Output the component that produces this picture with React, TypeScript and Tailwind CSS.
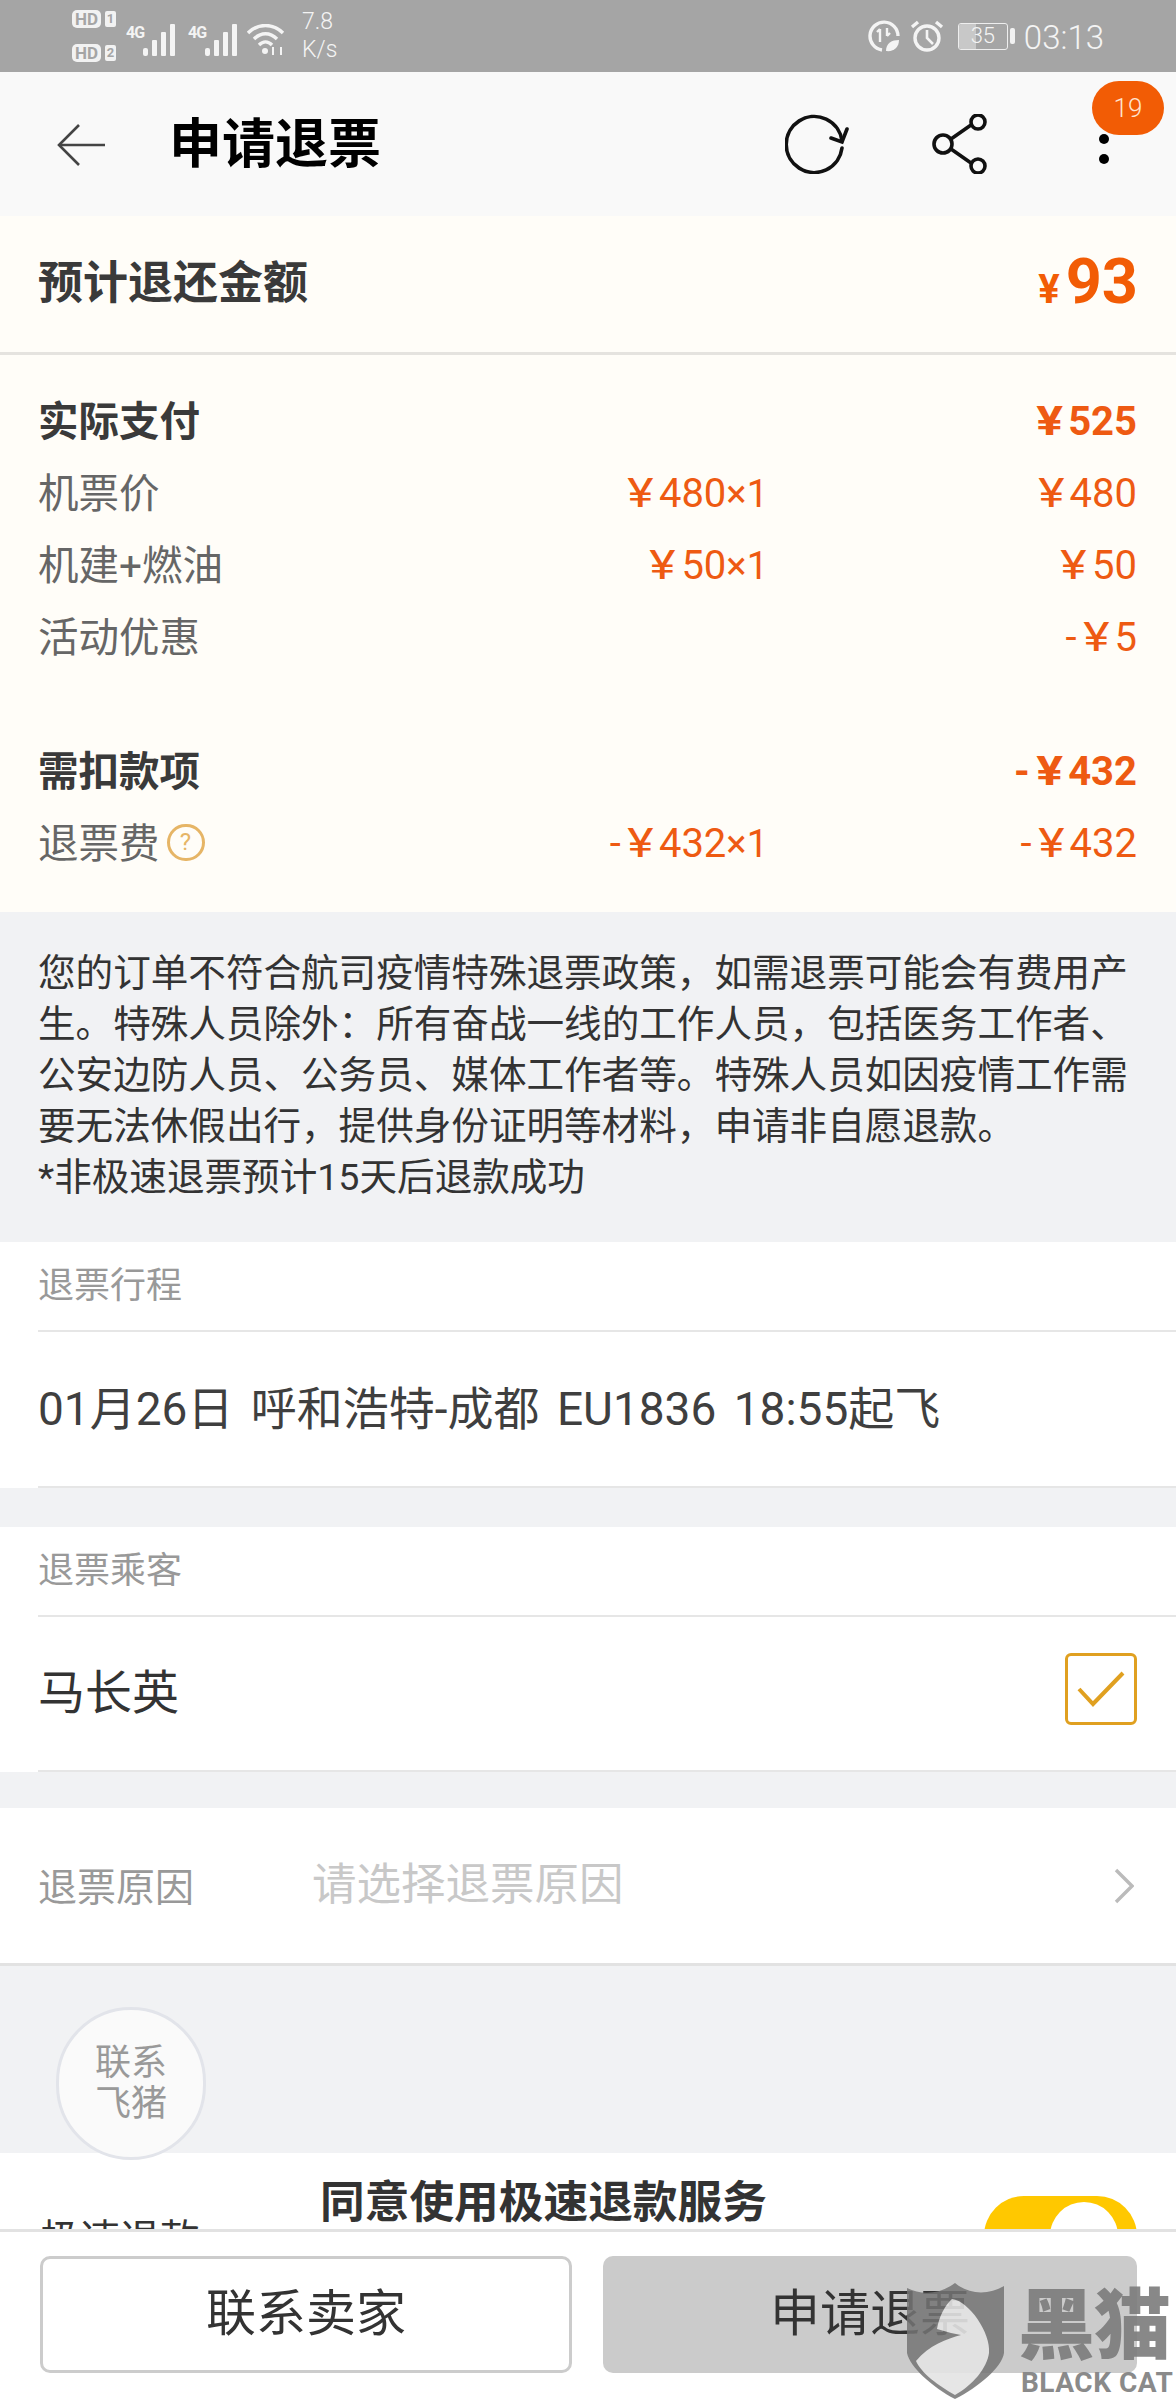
import React from "react";

const font = { fontFamily: 'Roboto, "Noto Sans CJK SC", sans-serif' };

function Bars() {
  return (
    <svg width="34" height="32" viewBox="0 0 34 32" fill="#f4f4f4">
      <rect x="0" y="24" width="5" height="8" rx="2" />
      <rect x="9" y="16" width="5" height="16" rx="1" />
      <rect x="18" y="8" width="5" height="24" rx="1" />
      <rect x="27" y="0" width="5" height="32" rx="1" />
    </svg>
  );
}

function Hd({ n }: { n: string }) {
  return (
    <div className="flex items-center gap-[4px]">
      <span className="w-[29px] h-[18px] rounded-[5px] bg-[#f2f2f2] text-[#a5a5a5] text-[17px] leading-[18px] font-bold text-center">HD</span>
      <span className="w-[11px] h-[16px] rounded-[2px] bg-[#f2f2f2] text-[#a5a5a5] text-[13px] leading-[16px] font-bold text-center">{n}</span>
    </div>
  );
}

function StatusBar() {
  return (
    <div className="h-[72px] bg-[#a5a5a5] flex items-center justify-between pl-[72px] pr-[72px] text-[#f4f4f4] shrink-0">
      <div className="flex items-center">
        <div className="flex flex-col gap-[16px]">
          <Hd n="1" />
          <Hd n="2" />
        </div>
        <div className="flex items-end ml-[10px] h-[32px] mt-[8px]">
          <span className="text-[16px] leading-[14px] font-bold self-start mt-[2px] w-[17px] whitespace-nowrap tracking-[-1px]">4G</span>
          <Bars />
          <span className="text-[16px] leading-[14px] font-bold self-start mt-[2px] ml-[11px] w-[17px] whitespace-nowrap tracking-[-1px]">4G</span>
          <Bars />
        </div>
        <svg className="ml-[8px] mt-[8px]" width="38" height="32" viewBox="0 0 38 32" fill="none" stroke="#f4f4f4" strokeWidth="3.4">
          <path d="M1 9 C11 -1 26 -1 36 9" />
          <path d="M7 15 C14 8 23 8 30 15" />
          <path d="M12 21 C16 17 21 17 25 21" />
          <circle cx="18" cy="27" r="3" fill="#f4f4f4" stroke="none" />
          <path d="M26 31 V23 M34 23 V31" strokeWidth="2" />
        </svg>
        <div className="ml-[17px] text-[23px] leading-[28px] font-light">
          <div>7.8</div>
          <div>K/s</div>
        </div>
      </div>
      <div className="flex items-center">
        <svg width="32" height="34" viewBox="0 0 32 34" fill="none" stroke="#f4f4f4" strokeWidth="3.4">
          <path d="M14 31 A14 14 0 1 1 30 17" />
          <path d="M12 10 L9 13 M12 10 V23 M19 9 V17 M19 17 L22 14" strokeWidth="2.4" />
          <path d="M18 32 C18 24 24 21 31 21 C31 28 26 33 18 32 Z" fill="#f4f4f4" stroke="none" />
        </svg>
        <svg className="ml-[10px]" width="34" height="32" viewBox="0 0 34 32" fill="none" stroke="#f4f4f4" strokeWidth="3.4">
          <circle cx="17" cy="18" r="12" />
          <path d="M17 10 V18 L23 24" strokeWidth="2.6" />
          <path d="M2 7 L8 2 M32 7 L26 2" />
        </svg>
        <div className="ml-[14px] w-[50px] h-[27px] rounded-[3px] border border-[#eeeeee] relative overflow-hidden flex items-center justify-center">
          <div className="absolute left-0 top-0 bottom-0 w-[17px] bg-[#c8c8c8]"></div>
          <span className="relative text-[22px] font-light leading-none">35</span>
        </div>
        <div className="ml-[2px] w-[5px] h-[16px] rounded-[2px] bg-[#f2f2f2]"></div>
        <div className="ml-[9px] text-[33px] leading-none font-light mt-[2px]">03:13</div>
      </div>
    </div>
  );
}

function Header() {
  return (
    <div className="h-[144px] bg-[#f9f9f9] flex items-center shrink-0 relative">
      <svg className="ml-[57px] mt-[1px]" width="50" height="44" viewBox="0 0 50 44" fill="none" stroke="#444444" strokeWidth="2.6">
        <path d="M22 2 L2 22 L22 42" />
        <path d="M2 22 H48" />
      </svg>
      <div className="ml-[65px] -translate-x-[3px] text-[53px] leading-none font-semibold text-black mt-[2px]">申请退票</div>
      <svg className="ml-auto" width="64" height="60" viewBox="0 0 64 60" fill="none" stroke="#111111" strokeWidth="3.6" strokeLinecap="round">
        <path d="M57 34 A28 28 0 1 1 57 27" />
        <path d="M46 24 L57 28 L62 15" />
      </svg>
      <svg className="ml-[81px]" width="60" height="60" viewBox="0 0 60 60" fill="none" stroke="#111111" strokeWidth="3.6">
        <circle cx="13" cy="30" r="9" />
        <circle cx="48" cy="8" r="7" />
        <circle cx="48" cy="52" r="7" />
        <path d="M21 25 L41 11 M21 35 L41 49" />
      </svg>
      <div className="ml-[109px] mr-[67px] w-[10px] flex flex-col gap-[10px] mt-[10px]">
        <div className="w-[10px] h-[10px] rounded-full bg-black"></div>
        <div className="w-[10px] h-[10px] rounded-full bg-black"></div>
      </div>
      <div className="absolute left-[1092px] top-[9px] w-[72px] h-[54px] rounded-[27px] bg-[#f25c05] text-[#ffe3cf] text-[26px] font-light leading-[54px] text-center">19</div>
    </div>
  );
}

function Money({ neg, value, x }: { neg?: boolean; value: string; x?: boolean }) {
  return (
    <span className="inline-flex items-baseline justify-end whitespace-nowrap">
      {neg && <span className="mr-[9px]">-</span>}
      <span className="mr-[8px] scale-x-125">¥</span>
      <span>{value}</span>
      {x && <span className="text-[38px]">×1</span>}
    </span>
  );
}

function Row({ label, mid, right, bold, icon }: { label: string; mid?: React.ReactNode; right: React.ReactNode; bold?: boolean; icon?: boolean }) {
  return (
    <div className="h-[72px] flex items-center">
      <div className={`flex-1 flex items-center text-[40.5px] ${bold ? "font-bold text-[#3a3a3a]" : "text-[#666666]"}`}>
        {label}
        {icon && (
          <span className="ml-[7px] -mt-[4px] w-[38px] h-[37px] rounded-full border-[3px] border-[#e6b566] text-[#e6b566] text-[24px] leading-[31px] text-center">?</span>
        )}
      </div>
      <div className="w-[300px] text-right text-[40px] text-[#ee5a12] mr-[408px]">{mid}</div>
      <div className={`absolute right-[39px] text-[40px] text-[#ee5a12] ${bold ? "font-bold" : ""}`}>{right}</div>
    </div>
  );
}

function SummaryCard() {
  return (
    <>
      <div className="h-[136px] bg-[#fffdf8] flex items-center justify-between pl-[38px] pr-[38px] shrink-0">
        <div className="text-[45px] font-bold text-[#3a3a3a]">预计退还金额</div>
        <div className="flex items-baseline text-[#f25c05] font-bold mt-[2px]">
          <span className="text-[40px] mr-[6px]">¥</span>
          <span className="text-[63px] leading-none">93</span>
        </div>
      </div>
      <div className="h-[3px] bg-[#e5e3df] shrink-0"></div>
      <div className="bg-[#fffdf8] h-[557px] pt-[31px] pl-[38px] relative shrink-0">
        <Row label="实际支付" right={<Money value="525" />} bold />
        <Row label="机票价" mid={<Money value="480" x />} right={<Money value="480" />} />
        <Row label="机建+燃油" mid={<Money value="50" x />} right={<Money value="50" />} />
        <Row label="活动优惠" right={<Money neg value="5" />} />
        <div className="h-[62px]"></div>
        <Row label="需扣款项" right={<Money neg value="432" />} bold />
        <Row label="退票费" mid={<Money neg value="432" x />} right={<Money neg value="432" />} icon />
      </div>
    </>
  );
}

function Notice() {
  return (
    <div className="bg-[#f1f2f4] h-[330px] pt-[36px] px-[38px] text-[37.6px] leading-[51px] text-[#333333] shrink-0">
      <div>您的订单不符合航司疫情特殊退票政策，如需退票可能会有费用产生。特殊人员除外：所有奋战一线的工作人员，包括医务工作者、公安边防人员、公务员、媒体工作者等。特殊人员如因疫情工作需要无法休假出行，提供身份证明等材料，申请非自愿退款。</div>
      <div>*非极速退票预计15天后退款成功</div>
    </div>
  );
}

function Section({ title, tall, children }: { title: string; tall?: boolean; children: React.ReactNode }) {
  return (
    <div className="bg-white pl-[38px] shrink-0">
      <div className="h-[90px] flex items-center text-[36px] text-[#999999] border-b-2 border-[#e6e6e6]">{title}</div>
      <div className={`flex items-center border-b-2 border-[#e6e6e6] ${tall ? "h-[156px]" : "h-[155px]"}`}>{children}</div>
    </div>
  );
}

function Watermark() {
  return (
    <div className="absolute left-[907px] top-[2283px] w-[269px] h-[117px] pointer-events-none">
      <svg className="absolute left-0 top-0 opacity-90" width="98" height="117" viewBox="0 0 98 117">
        <path d="M0 5 C14 12 32 12 48 0 C62 12 82 12 97 3 L97 70 C95 84 72 104 48 116 C25 104 3 84 0 70 Z" fill="#757575" fillOpacity="0.95" />
        <path d="M45 16 C62 18 84 50 82 70 C80 85 66 102 48 112 C32 103 14 90 9 78 C22 62 40 56 54 52 L44 50 L30 46 C32 34 38 22 45 16 Z" fill="#e4e4e4" />
      </svg>
      <div className="absolute left-[111px] top-[6px] text-[77px] leading-[77px] font-black text-[#7b7b7b]/90 tracking-[-1px] whitespace-nowrap">黑猫</div>
      <div className="absolute left-[114px] top-[86px] text-[28px] leading-[28px] font-bold text-[#8a8a8a] tracking-[0.5px] whitespace-nowrap">BLACK CAT</div>
    </div>
  );
}

export default function App() {
  return (
    <div className="relative w-[1176px] h-[2400px] overflow-hidden bg-[#f1f2f4] flex flex-col" style={font}>
      <StatusBar />
      <Header />
      <div className="flex-1 min-h-0 overflow-hidden flex flex-col">
        <SummaryCard />
        <Notice />
        <Section title="退票行程" tall>
          <div className="text-[46px] text-[#3f3f3f] [word-spacing:6px]">01月26日 呼和浩特-成都 EU1836 18:55起飞</div>
        </Section>
        <div className="h-[39px] shrink-0"></div>
        <Section title="退票乘客">
          <div className="text-[47px] text-[#333333] flex-1">马长英</div>
          <div className="mr-[39px] -mt-[10px] w-[72px] h-[72px] rounded-[6px] border-[3px] border-[#e0a020] flex items-center justify-center">
            <svg width="48" height="36" viewBox="0 0 48 36" fill="none" stroke="#e0a020" strokeWidth="4">
              <path d="M2 18 L16 33 L46 2" />
            </svg>
          </div>
        </Section>
        <div className="h-[36px] shrink-0"></div>
        <div className="h-[158px] bg-white border-b-[3px] border-[#e2e2e2] flex items-center pl-[38px] pr-[42px] shrink-0">
          <div className="w-[274px] text-[39px] text-[#999999] mt-[5px]">退票原因</div>
          <div className="flex-1 text-[44.5px] text-[#c8c8c8]">请选择退票原因</div>
          <svg width="20" height="36" viewBox="0 0 20 36" fill="none" stroke="#bbbbbb" strokeWidth="3.4">
            <path d="M2 2 L18 18 L2 34" />
          </svg>
        </div>
        <div className="h-[187px] shrink-0"></div>
        <div className="flex-1 bg-white flex relative pl-[40px] overflow-hidden">
          <div className="text-[40px] leading-none text-[#333333] mt-[67px] whitespace-nowrap">极速退款</div>
          <div className="ml-[120px] mt-[28px] text-[44.7px] leading-none font-bold text-[#333333] whitespace-nowrap">同意使用极速退款服务</div>
          <div className="absolute left-[984px] top-[43px] w-[153px] h-[80px] rounded-[40px] bg-[#ffc800] flex items-start justify-end p-[6px] pr-[19px]">
            <div className="w-[68px] h-[68px] rounded-full bg-white"></div>
          </div>
        </div>
      </div>
      <div className="h-[171px] bg-white border-t-[3px] border-[#e2e2e2] flex items-start gap-[31px] pl-[40px] pr-[39px] pt-[24px] shrink-0 relative">
        <div className="w-[532px] h-[117px] rounded-[10px] border-[3px] border-[#cccccc] bg-white text-[50px] text-[#333333] flex items-center justify-center">联系卖家</div>
        <div className="w-[534px] h-[117px] rounded-[10px] bg-[#cbcbcb] text-[50px] text-[#333333] flex items-center justify-center">申请退票</div>
      </div>
      <div className="absolute left-[56px] top-[2007px] w-[150px] h-[153px] rounded-full border-[3px] border-[#e2e4ea] bg-[#fafafa] text-[36px] leading-[41px] text-[#999999] flex items-center justify-center text-center">
        <div>联系<br />飞猪</div>
      </div>
      <Watermark />
    </div>
  );
}
